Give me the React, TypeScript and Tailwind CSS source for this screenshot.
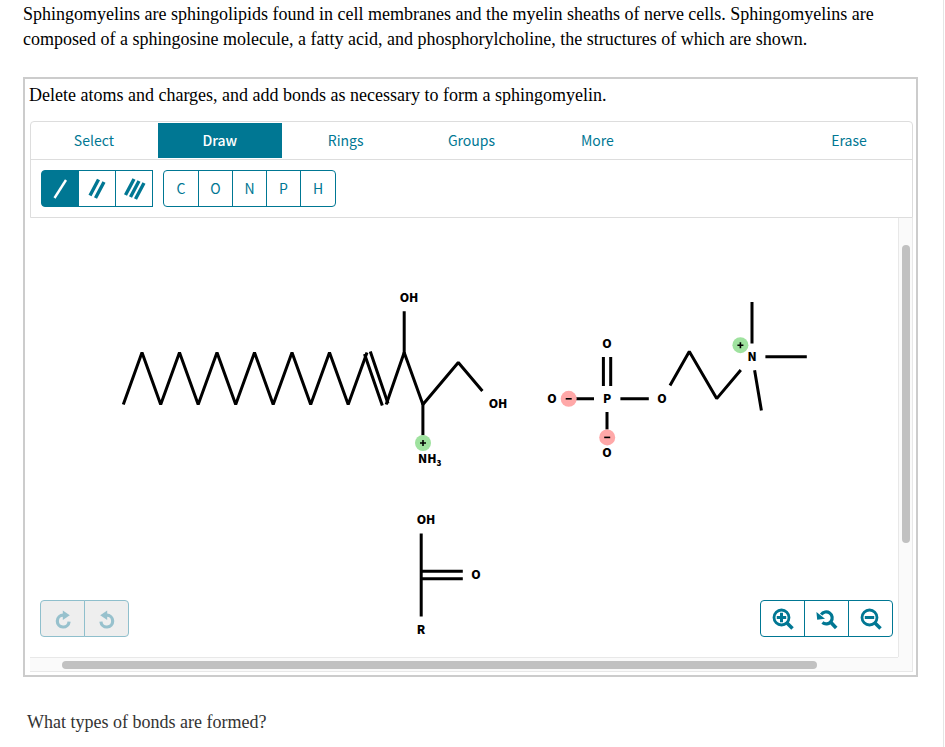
import clsx from 'clsx';
import type { ReactNode } from 'react';

const TABS = ['Select', 'Draw', 'Rings', 'Groups', 'More', '', 'Erase'];
const ATOMS = ['C', 'O', 'N', 'P', 'H'];

const BONDS = [
  { name: 'Single bond', d: 'M6.5 21L18 3', width: 2.4 },
  { name: 'Double bond', d: 'M5 18.5L13.5 2.5M10.5 21L19 5', width: 3.4 },
  { name: 'Triple bond', d: 'M3.5 18L12 2M8.5 20L17 4M13.5 22L22 6', width: 3.4 },
];

const BOND_PATHS = [
  // sphingosine
  'M93.3 186.5L112 134.5L130.7 186.5L149.5 134.5L168.2 186.5L187 134.5L205.7 186.5L224.5 134.5L243.2 186.5L262 134.5L280.7 186.5L299.5 134.5L318.2 186.5L337 134.5',
  'M334.5 136L352.3 187.5M340.3 133.5L358 185.5',
  'M356.2 186.5L374.2 134.5L392.9 186.5L428.3 144.5L452.4 173',
  'M374.2 93.3V136M392.9 185V217.5',
  // phosphorylcholine
  'M573.4 139V168M580.7 139V168',
  'M546 180.7H564M590.4 180.7H618.8M577 194V211.5',
  'M640 167.6L659.3 133.4L686.7 180.6L710.8 152',
  'M722 84V125.6M735.4 138.8H776.8M724.6 152.2L731.4 192.6',
  // fatty acid
  'M391.2 315.4V398.6M391.2 353.3H432.8M391.2 360.7H432.8',
];

const ATOM_LABELS = [
  { text: 'OH', x: 379, y: 84 },
  { text: 'OH', x: 468, y: 190 },
  { text: 'O', x: 577, y: 130 },
  { text: 'O', x: 522, y: 185 },
  { text: 'P', x: 577, y: 185 },
  { text: 'O', x: 632, y: 185 },
  { text: 'O', x: 577, y: 239 },
  { text: 'N', x: 722, y: 143 },
  { text: 'OH', x: 396, y: 306 },
  { text: 'O', x: 446, y: 361 },
  { text: 'R', x: 391, y: 416 },
];

const CHARGES = [
  { x: 393, y: 225, positive: true },
  { x: 710.4, y: 127.2, positive: true },
  { x: 538.7, y: 180.8, positive: false },
  { x: 577.2, y: 219.4, positive: false },
];

function Charge({ x, y, positive }: { x: number; y: number; positive: boolean }) {
  return (
    <g>
      <circle cx={x} cy={y} r="8" fill={positive ? '#9fe29f' : '#ffa8a8'} />
      <path
        d={positive ? `M${x - 3} ${y}h6M${x} ${y - 3}v6` : `M${x - 3} ${y}h6`}
        stroke="#000"
        strokeWidth="1.6"
      />
    </g>
  );
}

function Molecules() {
  return (
    <svg viewBox="0 0 868 439" className="block w-full h-auto" role="img" aria-label="Sphingosine, phosphorylcholine and fatty acid">
      <g fill="none" stroke="#000" strokeWidth="3" strokeLinejoin="bevel">
        {BOND_PATHS.map((d) => (
          <path key={d} d={d} />
        ))}
      </g>
      {CHARGES.map((charge) => (
        <Charge key={charge.x} {...charge} />
      ))}
      <g textAnchor="middle" className="font-['Noto_Sans_CJK_SC',sans-serif] text-[12px] font-black">
        {ATOM_LABELS.map(({ text, x, y }) => (
          <text key={`${x}-${y}`} x={x} y={y}>{text}</text>
        ))}
        <text x="388" y="245" textAnchor="start">
          NH<tspan dy="3" className="text-[8px]">3</tspan>
        </text>
      </g>
    </svg>
  );
}

function RotateIcon({ flip }: { flip?: boolean }) {
  return (
    <svg viewBox="0 0 18 20" className={clsx('w-[18px] h-5', flip && '-scale-x-100')}>
      <path d="M15.1 12.6A5.9 5.9 0 1 1 9.2 6.2" fill="none" stroke="currentColor" strokeWidth="3.2" />
      <path d="M8.8 1.4L15.8 6.2L8.8 11Z" fill="currentColor" />
    </svg>
  );
}

function ZoomIcon({ sign }: { sign: string }) {
  return (
    <svg viewBox="0 0 24 24" className="size-6" fill="none" stroke="currentColor">
      <circle cx="10.5" cy="10.5" r="7.5" strokeWidth="2.8" />
      <path d={sign} strokeWidth="3" />
      <path d="M16 16L21.5 21.5" strokeWidth="3.6" />
    </svg>
  );
}

function ZoomResetIcon() {
  return (
    <svg viewBox="0 0 24 24" className="size-6" fill="none" stroke="currentColor">
      <path d="M6.2 7.6A6 6 0 1 1 7.4 15.6" strokeWidth="3.2" />
      <path d="M1.4 5L2.2 12.8L10 11.8Z" fill="currentColor" stroke="none" />
      <path d="M15.5 15L21.2 21" strokeWidth="3.6" />
    </svg>
  );
}

function CanvasButton({ label, disabled, children }: { label: string; disabled?: boolean; children: ReactNode }) {
  return (
    <button
      type="button"
      aria-label={label}
      disabled={disabled}
      className={clsx(
        'flex w-[45px] h-[37px] items-center justify-center border -ml-px first:ml-0 first:rounded-l last:rounded-r',
        disabled ? 'border-[#8fbfcc] bg-[#eeeeee] text-[#97c1cd]' : 'border-[#007793] bg-white text-[#007793]',
      )}
    >
      {children}
    </button>
  );
}

function Toolbar() {
  return (
    <div className="border border-[#dddddd] rounded-t font-['Noto_Sans_CJK_SC',sans-serif] text-[14px] leading-5 text-[#007793]">
      <div className="grid grid-cols-7 py-px border-b border-[#dddddd]">
        {TABS.map((tab, index) =>
          tab ? (
            <button
              key={tab}
              type="button"
              className={clsx('h-[35px] mx-px pb-0.5', tab === 'Draw' && 'bg-[#007793] text-white font-medium')}
            >
              {tab}
            </button>
          ) : (
            <span key={index} />
          ),
        )}
      </div>
      <div className="flex gap-[10px] px-[10px] py-[10px]">
        <div className="flex">
          {BONDS.map(({ name, d, width }, index) => (
            <button
              key={name}
              type="button"
              aria-label={name}
              className={clsx(
                'flex w-[38px] h-[37px] items-center justify-center border border-[#007793] -ml-px first:ml-0 first:rounded-l',
                index === 0 && 'bg-[#007793] text-white',
              )}
            >
              <svg viewBox="0 0 24 24" className="size-6" fill="none" stroke="currentColor" strokeWidth={width}>
                <path d={d} />
              </svg>
            </button>
          ))}
        </div>
        <div className="flex">
          {ATOMS.map((atom) => (
            <button
              key={atom}
              type="button"
              className="w-[35px] h-[37px] pb-0.5 border border-[#007793] -ml-px first:ml-0 first:w-9 first:rounded-l last:w-9 last:rounded-r"
            >
              {atom}
            </button>
          ))}
        </div>
      </div>
    </div>
  );
}

export default function App() {
  return (
    <div className="min-h-screen bg-white pr-px">
      <main className="min-h-screen border-r border-[#e5e5e5] pl-[23px] pr-[25px] pt-[2px] font-['Liberation_Serif',serif] text-[18px] leading-[25px] text-black">
        <p>
          Sphingomyelins are sphingolipids found in cell membranes and the myelin sheaths of nerve cells. Sphingomyelins are
          composed of a sphingosine molecule, a fatty acid, and phosphorylcholine, the structures of which are shown.
        </p>

        <section className="mt-[25px] border-2 border-[#cccccc] pl-[5px] pr-[3px] pt-1 pb-[3px]">
          <p className="-ml-px mb-[13px]">Delete atoms and charges, and add bonds as necessary to form a sphingomyelin.</p>
          <Toolbar />
          <div className="grid grid-cols-[1fr_15px]">
            <div className="relative overflow-hidden">
              <Molecules />
              <div className="absolute left-[10px] bottom-5 flex">
                <CanvasButton label="Redo" disabled><RotateIcon /></CanvasButton>
                <CanvasButton label="Undo" disabled><RotateIcon flip /></CanvasButton>
              </div>
              <div className="absolute right-[5px] bottom-5 flex">
                <CanvasButton label="Zoom in"><ZoomIcon sign="M5.8 10.5H15.2M10.5 5.8V15.2" /></CanvasButton>
                <CanvasButton label="Reset zoom"><ZoomResetIcon /></CanvasButton>
                <CanvasButton label="Zoom out"><ZoomIcon sign="M5.8 10.5H15.2" /></CanvasButton>
              </div>
            </div>
            <div className="border-x border-[#e8e8e8] bg-[#fafafa] px-[3px] pt-[27px]">
              <div className="h-[298px] w-2 rounded bg-[#c1c1c1]" />
            </div>
            <div className="border-y border-[#e8e8e8] bg-[#fafafa] pl-8 pt-[3px] pb-0.5">
              <div className="h-2 w-[755px] rounded bg-[#c1c1c1]" />
            </div>
            <div className="border-r border-b border-[#e8e8e8] bg-[#fafafa]" />
          </div>
        </section>

        <p className="mt-[33px] pl-1 text-[#333333]">What types of bonds are formed?</p>
      </main>
    </div>
  );
}
